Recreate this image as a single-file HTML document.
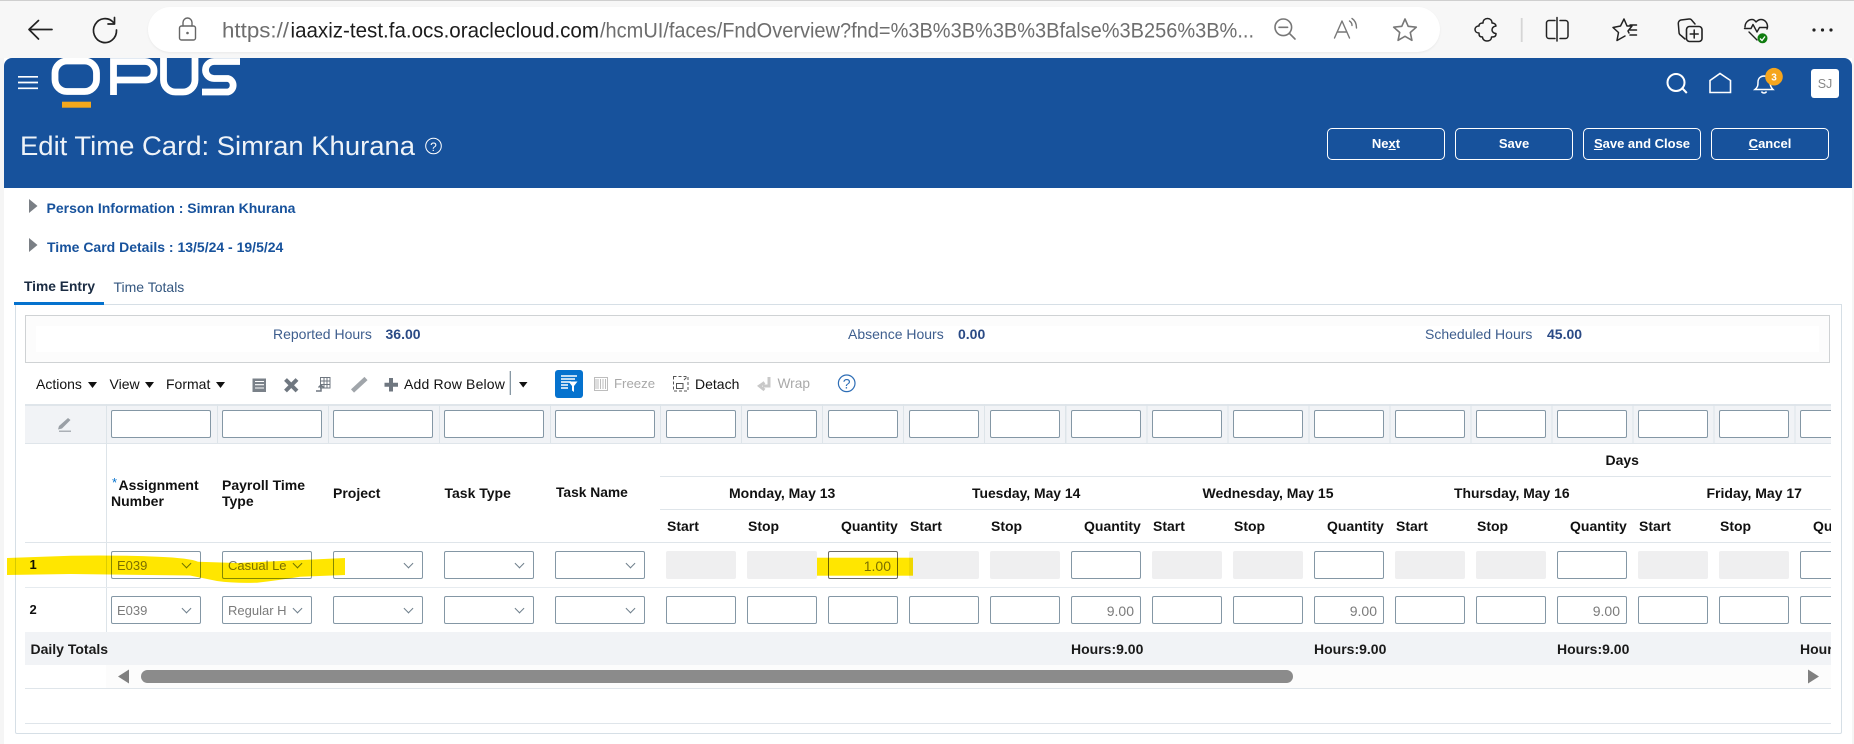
<!DOCTYPE html>
<html><head><meta charset="utf-8"><title>Edit Time Card</title>
<style>
html,body{margin:0;padding:0;background:#fff}
body{position:relative;width:1854px;height:744px;overflow:hidden;font-family:"Liberation Sans",sans-serif;font-size:14px;color:#111}
.a{position:absolute}
.t{position:absolute;white-space:nowrap;line-height:20px;height:20px}
.b{font-weight:bold}
.btn{position:absolute;top:128px;width:118px;height:32px;box-sizing:border-box;border:1px solid #fff;border-radius:5px;color:#fff;font-weight:bold;font-size:13px;line-height:29px;text-align:center;white-space:nowrap}
.i{position:absolute;box-sizing:border-box;width:70px;height:28px;border:1px solid #8497a5;border-radius:2px;background:#fff;font-size:14px;line-height:28px;color:#7b7b7b;text-align:right;padding-right:6px}
.w{width:100px}
.d{position:absolute;box-sizing:border-box;width:90px;height:28px;border:1px solid #8497a5;border-radius:2px;background:#fff;font-size:13px;line-height:28px;color:#7b7b7b;padding-left:5px;overflow:hidden;white-space:nowrap}
.d span{display:block;width:58px;overflow:hidden}
.d:after{content:"";position:absolute;right:10px;top:8px;width:6px;height:6px;border-right:1px solid #6f7f8c;border-bottom:1px solid #6f7f8c;transform:rotate(45deg)}
.x{position:absolute;width:70px;height:28px;border-radius:2px;background:#efeff0}
.l{position:absolute;height:1px;background:#dfe5ea}
</style></head>
<body>
<!-- browser chrome -->
<div class="a" style="left:0;top:0;width:1854px;height:58px;background:#f7f7f7"></div>
<div class="a" style="left:0;top:0;width:1854px;height:1px;background:#cfcfcf"></div>
<div class="a" style="left:148px;top:7px;width:1292px;height:45px;border-radius:23px;background:#fff;box-shadow:0 1px 2px rgba(0,0,0,.06)"></div>
<svg class="a" style="left:0;top:0" width="1854" height="58" font-family="Liberation Sans" font-size="21">
<text x="222" y="37.5" fill="#6e6e6e" textLength="67" lengthAdjust="spacingAndGlyphs">https://</text>
<text x="290.5" y="37.5" fill="#1c1c1c" textLength="308.5" lengthAdjust="spacingAndGlyphs">iaaxiz-test.fa.ocs.oraclecloud.com</text>
<text x="600" y="37.5" fill="#6e6e6e" textLength="654" lengthAdjust="spacingAndGlyphs">/hcmUI/faces/FndOverview?fnd=%3B%3B%3B%3Bfalse%3B256%3B%...</text>
<g fill="none" stroke="#222" stroke-width="1.7" stroke-linecap="round" stroke-linejoin="round">
<path d="M52 29.5H29.5M38.5 20.5L29 29.5L38.5 39"/>
<path d="M113.5 22.5A11.5 12 0 1 0 116.5 30"/>
<path d="M114.5 17.5V24H108"/>
<g stroke="#666" stroke-width="1.4"><rect x="179.5" y="26" width="16" height="14" rx="2"/><path d="M183 26V22.5a4.5 4.5 0 0 1 9 0V26"/><circle cx="187.500" cy="33" r=".6"/></g>
<g stroke="#777" stroke-width="1.6"><circle cx="1283.3" cy="27.3" r="8.3"/><path d="M1289.3 33.3L1295 39M1279 27.3H1287.600"/>
<path d="M1334.500 38L1342 21L1349.500 38M1337.500 32H1346.500" stroke-width="1.400"/>
<path d="M1349.500 21c1.700 1 2.500 2.700 2.500 4.500M1352 18.500c3 1.900 4.500 5.500 4.500 9.500" stroke-width="1.400"/>
<path d="M1405 19L1408.200 26.300L1416.300 27.200L1410.300 32.500L1411.900 40.300L1405 36.300L1398.100 40.300L1399.700 32.500L1393.700 27.200L1401.800 26.300Z"/></g>
<path d="M1483 23C1483 20 1485 18.500 1487.500 18.500C1490 18.500 1492 20 1492 23C1494.500 23 1496 24.500 1496 26C1493 26.500 1492 28 1492 30C1492 32 1494 33.500 1496 33.500C1496 37 1494 37 1491.500 37C1491.500 40 1489 41 1487 41C1484 41 1482.500 39 1482.500 37C1479 37 1479 35 1479 33C1476.500 33 1475 31.500 1475 29.500C1475 27.500 1476.500 26 1479 26C1479 24 1480 23 1483 23Z" stroke-width="1.500"/>
<path d="M1555 20.500H1549a2.500 2.500 0 0 0-2.500 2.500V36a2.500 2.500 0 0 0 2.500 2.500H1555M1560 20.500H1565.500a2.500 2.500 0 0 1 2.500 2.500V36a2.500 2.500 0 0 1-2.500 2.500H1560M1557 17.500V41" stroke-width="1.500"/>
<path d="M1624 19L1627 26H1632L1628 31L1629 33M1624 19L1620.500 26L1613 27.500L1618.500 32.500L1617 40.500L1625 36" stroke-width="1.500"/>
<path d="M1630 25H1636.500M1630 30H1636.500M1630 35H1636.500" stroke-width="1.500"/>
<rect x="1686.500" y="26.500" width="15.500" height="15" rx="3" stroke-width="1.600"/>
<path d="M1694.200 30V38M1690.200 34H1698.200" stroke-width="1.500"/>
<path d="M1695 24L1692 20.500a3 3 0 0 0-3-1.500L1681 20a3.500 3.500 0 0 0-2.700 3.500L1679 32a4 4 0 0 0 2 3.500L1685 39" stroke-width="1.500"/>
<path d="M1745 27C1745 22 1749 19.500 1752 19.500C1754 19.500 1755 20.500 1756 22C1757.500 20.500 1759 19.500 1761 19.500C1765 19.500 1767.500 23 1767.500 26.500C1767.500 27.500 1767.300 28.500 1767 29" stroke-width="1.500"/>
<path d="M1744.500 28.500H1751L1753 24.500L1757 32L1759.500 27.500H1767M1749 32L1757 40" stroke-width="1.400"/>
</g>
<circle cx="1762.500" cy="38.300" r="5" fill="#107c10"/>
<path d="M1760 38.500L1762 40.500L1765 36.500" fill="none" stroke="#fff" stroke-width="1.300"/>
<path d="M1521.700 18V42" stroke="#d5d5d5" stroke-width="1.800"/>
<g fill="#222"><circle cx="1814" cy="30" r="1.600"/><circle cx="1822.500" cy="30" r="1.600"/><circle cx="1831" cy="30" r="1.600"/></g>
</svg>

<!-- page side strips -->
<div class="a" style="left:0;top:58px;width:4px;height:686px;background:#f5f5f5"></div>
<div class="a" style="left:1852px;top:58px;width:2px;height:686px;background:#f5f5f5"></div>

<!-- blue header -->
<div class="a" style="left:4px;top:58px;width:1848px;height:130px;background:#17529c;border-radius:8px 8px 0 0"></div>
<svg class="a" style="left:0;top:58px" width="1854" height="130" viewBox="0 58 1854 130">
<g fill="none" stroke="#fff" stroke-width="6.800">
<rect x="55" y="61" width="41.500" height="30.500" rx="12"/>
<path d="M113.500 95V61.500H145a9 9 0 0 1 9 9V72a8 8 0 0 1-8 8H116"/>
<path d="M163.500 55V80a12 12 0 0 0 12 12H183a12 12 0 0 0 12-12V55"/>
<path d="M240 61.500H214a8.500 8.500 0 0 0 0 17H228a7 7 0 0 1 0 13.500H202"/>
</g>
<g stroke="#fff" stroke-width="1.700"><path d="M18 76.800H38M18 82.500H38M18 88.300H38"/></g>
<rect x="62" y="101.700" width="29" height="6" fill="#f5a81c"/>
<text x="20" y="155" font-family="Liberation Sans" font-size="26.500" fill="#fff" fill-opacity=".93" textLength="395" lengthAdjust="spacingAndGlyphs">Edit Time Card: Simran Khurana</text>
<circle cx="433.500" cy="146" r="7.800" fill="none" stroke="#fff" stroke-width="1"/>
<text x="433.500" y="151" font-family="Liberation Sans" font-size="12" fill="#fff" text-anchor="middle">?</text>
<g fill="none" stroke="#fff" stroke-width="2">
<circle cx="1676" cy="82.500" r="8.500"/><path d="M1682.500 88.500L1686.800 93"/>
</g>
<path d="M1710 92.500V80.500L1720 73.500L1730.500 80.500V92.500Z" fill="none" stroke="#fff" stroke-width="1.600"/>
<path d="M1755 89.500C1758 87 1758 85 1758 82C1758 78 1761 76 1764 76C1767 76 1770 78 1770 82C1770 85 1770.500 87 1773 89.500ZM1761.500 91.500C1762.500 93.500 1765.500 93.500 1766.500 91.500" fill="none" stroke="#fff" stroke-width="1.500"/>
<circle cx="1774" cy="76.700" r="8.800" fill="#f5a51d"/>
<text x="1774" y="80.500" font-family="Liberation Sans" font-weight="bold" font-size="10" fill="#fff" text-anchor="middle">3</text>
<rect x="1811" y="69" width="28" height="29" rx="3" fill="#fff"/>
<text x="1825" y="88" font-family="Liberation Sans" font-size="12.500" fill="#888" text-anchor="middle">SJ</text>
</svg>
<div class="btn" style="left:1327px">Ne<u>x</u>t</div>
<div class="btn" style="left:1455px">Save</div>
<div class="btn" style="left:1583px"><u>S</u>ave and Close</div>
<div class="btn" style="left:1711px"><u>C</u>ancel</div>

<!-- disclosures -->
<svg class="a" style="left:0;top:190px" width="60" height="70"><path d="M29 9L37.500 16L29 23ZM29 48L37.500 55L29 62Z" fill="#7a7f85"/></svg>
<div class="t b" style="left:46.500px;top:198px;color:#17529c">Person Information : Simran Khurana</div>
<div class="t b" style="left:47px;top:237px;color:#17529c">Time Card Details : 13/5/24 - 19/5/24</div>

<!-- tabs -->
<div class="t b" style="left:24px;top:277px;color:#1a2b42;font-size:13.800px">Time Entry</div>
<div class="t" style="left:113.500px;top:277px;color:#33567f">Time Totals</div>
<div class="a" style="left:14.500px;top:304px;width:1827px;height:430px;box-sizing:border-box;border:1.500px solid #d6dfe6;border-radius:0 0 2px 2px"></div>
<div class="a" style="left:14px;top:302px;width:90px;height:3px;background:#0572ce"></div>

<!-- summary -->
<div class="a" style="left:25px;top:315px;width:1805px;height:48px;box-sizing:border-box;border:1.500px solid #cfd2d4;background:#fcfcfc"></div>
<div class="a" style="left:36px;top:326px;width:1783px;height:26px;background:#fff"></div>
<div class="t" style="left:273px;top:324px;color:#3e5e8e">Reported Hours</div>
<div class="t b" style="left:385.500px;top:324px;color:#2a4a85">36.00</div>
<div class="t" style="left:848px;top:324px;color:#3e5e8e">Absence Hours</div>
<div class="t b" style="left:958px;top:324px;color:#2a4a85">0.00</div>
<div class="t" style="left:1425px;top:324px;color:#3e5e8e">Scheduled Hours</div>
<div class="t b" style="left:1547px;top:324px;color:#2a4a85">45.00</div>

<!-- toolbar -->
<div class="t" style="left:36px;top:374px">Actions</div>
<div class="t" style="left:109.500px;top:374px">View</div>
<div class="t" style="left:166px;top:374px">Format</div>
<div class="t" style="left:404px;top:374px;letter-spacing:.17px">Add Row Below</div>
<div class="t" style="left:614px;top:374px;color:#a9a9a9;font-size:13.200px">Freeze</div>
<div class="t" style="left:695px;top:374px">Detach</div>
<div class="t" style="left:777.500px;top:374px;color:#a9a9a9;font-size:13.700px">Wrap</div>
<svg class="a" style="left:0;top:365px" width="900" height="40" viewBox="0 365 900 40">
<g fill="#111"><path d="M88 382H97L92.500 388ZM145 382H154L149.500 388ZM216 382H225L220.500 388ZM519 382H527.500L523.200 387.500Z"/></g>
<g fill="none" stroke="#6f7780">
<rect x="252.500" y="378" width="13.500" height="14" fill="#7a8189" stroke="none"/>
<path d="M252.500 378H266" stroke="#fff" stroke-width="1"/>
<path d="M255 381.500H264M255 384.700H264M255 388H264" stroke="#fff" stroke-width="1.100"/>
<path d="M285.500 379.500L297 391M297 379.500L285.500 391" stroke-width="4"/>
<path d="M320.500 377.500H330V388H320.500ZM320.500 381H330M320.500 384.500H330M324 377.500V388M327 377.500V388" stroke-width="1"/>
<path d="M321 386V391H316M318.500 387.500L321 385L323.500 387.500" stroke-width="1.500"/>
<path d="M352.500 391L366 378.500" stroke="#a0a5aa" stroke-width="4.500"/>
<path d="M391 378V391.500M384.500 384.700H398" stroke="#6f7780" stroke-width="4"/>
<path d="M510.300 371V395" stroke="#7a8c9a" stroke-width="1.200"/>
</g>
<rect x="555" y="370" width="28" height="28" rx="3" fill="#0572ce"/>
<g fill="none" stroke="#fff" stroke-width="1.500"><path d="M561 376H577M561 379H575M561 382H571M561 385H568M561 388H568"/></g>
<path d="M568.500 381.500H577.500L574 386V392L572 390.500V386Z" fill="#fff"/>
<g fill="none" stroke="#bdbdbd"><rect x="594.500" y="377.500" width="13" height="13"/><path d="M598 379V389M600.500 379V389M603 379V389M605.500 379V389M596 379V389" stroke-width="1"/></g>
<g fill="none" stroke="#555"><rect x="673.500" y="376.500" width="14.500" height="14.500" stroke-dasharray="3 2" stroke-width="1"/><rect x="676.500" y="383.500" width="6.500" height="5" stroke-width="1"/><path d="M684 380L686.500 377.500" stroke-width="1"/></g>
<path d="M769 377V386H763M764.500 382.500L759.500 386L764.500 390" fill="none" stroke="#c8c8c8" stroke-width="3"/>
<circle cx="846.700" cy="383.300" r="8.300" fill="none" stroke="#2d6db5" stroke-width="1.200"/>
<text x="846.700" y="388.500" font-family="Liberation Sans" font-size="14" fill="#2d6db5" text-anchor="middle">?</text>
</svg>

<!-- table -->
<div class="a" style="left:0;top:0;width:1831px;height:744px;overflow:hidden">
<div class="a" style="left:25px;top:404px;width:1806px;height:39px;background:#f1f3f6"></div>
<div class="l" style="left:25px;top:404px;width:1806px;height:1.500px"></div>
<div class="l" style="left:25px;top:442.500px;width:1806px;height:1.500px"></div>
<div class="a" style="left:105.500px;top:404px;width:1px;height:228px;background:#dde4e9"></div>
<div class="a" style="left:216.500px;top:404px;width:1px;height:39px;background:#dde4e9"></div>
<div class="a" style="left:327.500px;top:404px;width:1px;height:39px;background:#dde4e9"></div>
<div class="a" style="left:438.500px;top:404px;width:1px;height:39px;background:#dde4e9"></div>
<div class="a" style="left:549.500px;top:404px;width:1px;height:39px;background:#dde4e9"></div>
<div class="a" style="left:660.200px;top:404px;width:1171px;height:39px;background:repeating-linear-gradient(90deg,#dde4e9 0,#dde4e9 1px,transparent 1px,transparent 81.050px)"></div>
<svg class="a" style="left:55px;top:415px" width="20" height="18"><path d="M4 11L13 3L15.500 5L7 13.500L3 14.500Z" fill="#9aa0a6"/><path d="M4 16.200H16" stroke="#9aa0a6" stroke-width="1.200"/></svg>

<!-- filter inputs -->
<div class="a" style="left:0;top:410px">
<div class="i w" style="left:111px"></div><div class="i w" style="left:222px"></div><div class="i w" style="left:333px"></div><div class="i w" style="left:444px"></div><div class="i w" style="left:555px"></div>
<div class="i" style="left:666px"></div><div class="i" style="left:747px"></div><div class="i" style="left:828px"></div><div class="i" style="left:909px"></div><div class="i" style="left:990px"></div><div class="i" style="left:1071px"></div><div class="i" style="left:1152px"></div><div class="i" style="left:1233px"></div><div class="i" style="left:1314px"></div><div class="i" style="left:1395px"></div><div class="i" style="left:1476px"></div><div class="i" style="left:1557px"></div><div class="i" style="left:1638px"></div><div class="i" style="left:1719px"></div><div class="i" style="left:1800px"></div>
</div>

<!-- header -->
<div class="t b" style="left:1605.500px;top:450px;color:#111">Days</div>
<div class="l" style="left:660px;top:475.500px;width:1171px;height:1.500px"></div>
<div class="t b" style="left:729px;top:483px">Monday, May 13</div>
<div class="t b" style="left:972px;top:483px;font-size:13.900px">Tuesday, May 14</div>
<div class="t b" style="left:1202.500px;top:483px">Wednesday, May 15</div>
<div class="t b" style="left:1454px;top:483px;font-size:13.900px">Thursday, May 16</div>
<div class="t b" style="left:1706.500px;top:483px">Friday, May 17</div>
<div class="l" style="left:660px;top:508.500px;width:1171px;height:1.500px"></div>
<div class="t" style="left:112px;top:473px;color:#0572ce;font-size:13px">*</div>
<div class="t b" style="left:118.500px;top:475px">Assignment</div>
<div class="t b" style="left:111px;top:491px">Number</div>
<div class="t b" style="left:222px;top:475px">Payroll Time</div>
<div class="t b" style="left:222px;top:491px">Type</div>
<div class="t b" style="left:333px;top:483px">Project</div>
<div class="t b" style="left:444.500px;top:483px">Task Type</div>
<div class="t b" style="left:556px;top:483px;font-size:13.800px">Task Name</div>
<div class="t b" style="left:667px;top:516px">Start</div><div class="t b" style="left:748px;top:516px">Stop</div><div class="t b" style="left:841px;top:516px">Quantity</div>
<div class="t b" style="left:910px;top:516px">Start</div><div class="t b" style="left:991px;top:516px">Stop</div><div class="t b" style="left:1084px;top:516px">Quantity</div>
<div class="t b" style="left:1153px;top:516px">Start</div><div class="t b" style="left:1234px;top:516px">Stop</div><div class="t b" style="left:1327px;top:516px">Quantity</div>
<div class="t b" style="left:1396px;top:516px">Start</div><div class="t b" style="left:1477px;top:516px">Stop</div><div class="t b" style="left:1570px;top:516px">Quantity</div>
<div class="t b" style="left:1639px;top:516px">Start</div><div class="t b" style="left:1720px;top:516px">Stop</div><div class="t b" style="left:1813px;top:516px">Quantity</div>
<div class="l" style="left:25px;top:541.500px;width:1806px;height:1.500px"></div>

<!-- row 1 -->
<div class="t b" style="left:29.500px;top:555px;font-size:13px">1</div>
<div class="a" style="left:0;top:551px">
<div class="d" style="left:111px"><span>E039</span></div><div class="d" style="left:222px"><span>Casual Leave</span></div><div class="d" style="left:333px"></div><div class="d" style="left:444px"></div><div class="d" style="left:555px"></div>
<div class="x" style="left:666px"></div><div class="x" style="left:747px"></div><div class="i" style="left:828px;border-color:#6b6b6b">1.00</div>
<div class="x" style="left:909px"></div><div class="x" style="left:990px"></div><div class="i" style="left:1071px"></div>
<div class="x" style="left:1152px"></div><div class="x" style="left:1233px"></div><div class="i" style="left:1314px"></div>
<div class="x" style="left:1395px"></div><div class="x" style="left:1476px"></div><div class="i" style="left:1557px"></div>
<div class="x" style="left:1638px"></div><div class="x" style="left:1719px"></div><div class="i" style="left:1800px"></div>
</div>
<div class="l" style="left:25px;top:586.500px;width:1806px;height:1.500px;background:#e6ebef"></div>

<!-- row 2 -->
<div class="t b" style="left:29.500px;top:600px;font-size:13px">2</div>
<div class="a" style="left:0;top:596px">
<div class="d" style="left:111px"><span>E039</span></div><div class="d" style="left:222px"><span>Regular Hours</span></div><div class="d" style="left:333px"></div><div class="d" style="left:444px"></div><div class="d" style="left:555px"></div>
<div class="i" style="left:666px"></div><div class="i" style="left:747px"></div><div class="i" style="left:828px"></div>
<div class="i" style="left:909px"></div><div class="i" style="left:990px"></div><div class="i" style="left:1071px">9.00</div>
<div class="i" style="left:1152px"></div><div class="i" style="left:1233px"></div><div class="i" style="left:1314px">9.00</div>
<div class="i" style="left:1395px"></div><div class="i" style="left:1476px"></div><div class="i" style="left:1557px">9.00</div>
<div class="i" style="left:1638px"></div><div class="i" style="left:1719px"></div><div class="i" style="left:1800px"></div>
</div>

<!-- totals -->
<div class="a" style="left:25px;top:632px;width:1806px;height:33px;background:#f1f3f6"></div>
<div class="t b" style="left:30.500px;top:639px;color:#1a1a1a">Daily Totals</div>
<div class="t b" style="left:1071px;top:639px;color:#1a1a1a">Hours:9.00</div>
<div class="t b" style="left:1314px;top:639px;color:#1a1a1a">Hours:9.00</div>
<div class="t b" style="left:1557px;top:639px;color:#1a1a1a">Hours:9.00</div>
<div class="t b" style="left:1800px;top:639px;color:#1a1a1a">Hours:9.00</div>

<!-- scrollbar -->
<div class="a" style="left:106px;top:665px;width:1725px;height:23px;background:#fcfcfc"></div>
<div class="a" style="left:141px;top:670px;width:1152px;height:13px;background:#8b8b8b;border-radius:7px"></div>
<svg class="a" style="left:0;top:665px" width="1831" height="24"><path d="M129 4.500V18.500L118 11.500ZM1808 4.500V18.500L1819 11.500Z" fill="#808080"/></svg>
<div class="l" style="left:25px;top:688px;width:1806px;height:1px"></div>
<div class="l" style="left:25px;top:723px;width:1806px;height:1px"></div>
</div>

<!-- yellow highlighter -->
<svg class="a" style="left:0;top:540px;mix-blend-mode:multiply" width="1000" height="60" viewBox="0 540 1000 60">
<path d="M7 558L71 555.700Q120 555 158 556.700Q190 558 198 561.700L237 563L345 558V575L300 576.700Q280 580 257 582.700Q235 583.500 217 581L190 575.500L71 574L7 575Z" fill="#ffe600"/>
<rect x="817" y="557.700" width="96" height="18" fill="#ffe600"/>
</svg>
</body></html>
